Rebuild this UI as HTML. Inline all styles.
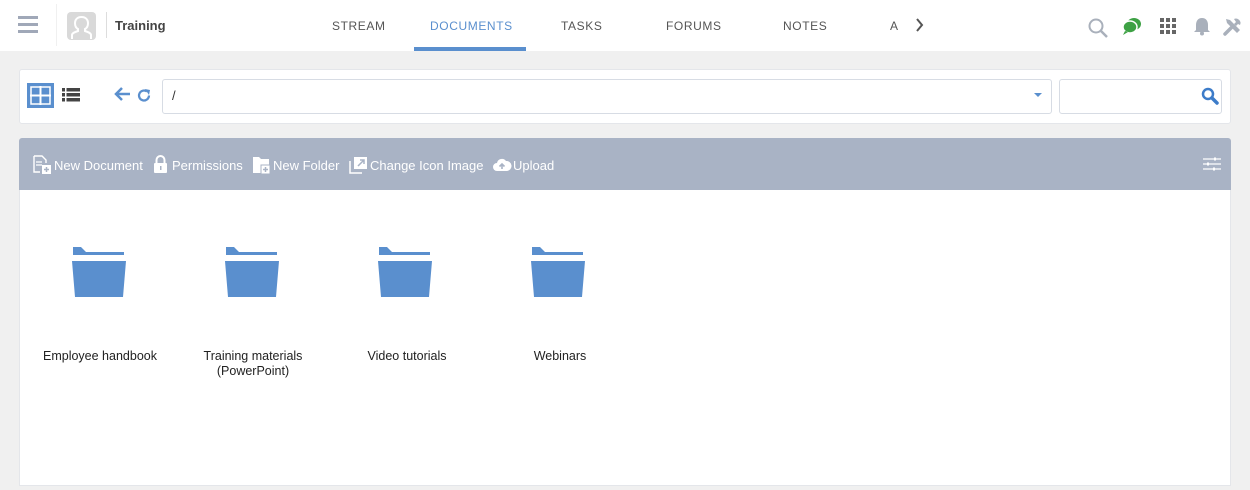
<!DOCTYPE html>
<html><head><meta charset="utf-8"><style>
*{box-sizing:border-box;margin:0;padding:0}
body{width:1250px;height:490px;background:#f0f0f0;font-family:"Liberation Sans",Arial,sans-serif;position:relative;overflow:hidden}
.hdr{position:absolute;left:0;top:0;width:1250px;height:51px;background:#fff}
.abs{position:absolute}
.nav{position:absolute;top:19px;font-size:12px;letter-spacing:0.6px;color:#555}
.card{position:absolute;background:#fff;border:1px solid #e4e6ea;border-radius:3px}
.inp{position:absolute;border:1px solid #d7dce4;border-radius:3px;background:#fff}
.bar{position:absolute;left:19px;top:138px;width:1212px;height:52px;background:#a9b3c5;border-radius:3px 3px 0 0}
.bi{position:absolute;top:19px;color:#fff;font-size:13px}
.lbl{position:absolute;width:150px;text-align:center;font-size:12.5px;color:#222;line-height:15px}
</style></head><body>
<div class="hdr">
  <div class="abs" style="left:18px;top:16px;width:20px;height:3px;background:#a0a8b8;box-shadow:0 7px 0 #a0a8b8,0 14px 0 #a0a8b8"></div>
  <div class="abs" style="left:56px;top:4px;width:1px;height:42px;background:#f0f0f0"></div>
  <svg class="abs" style="left:67px;top:12px" width="29" height="28"><rect width="29" height="28" rx="4" fill="#d9d9d9"/><path d="M5 27v-4c0-2 3-3 6-4v-2c-2-1-3-3-3-6 0-3 2-6 6.5-6s6.5 3 6.5 6c0 3-1 5-3 6v2c3 1 6 2 6 4v4" fill="none" stroke="#fff" stroke-width="2"/></svg>
  <div class="abs" style="left:106px;top:12px;width:1px;height:26px;background:#ddd"></div>
  <div class="abs" style="left:115px;top:18px;font-size:13px;font-weight:bold;color:#444">Training</div>
  <div class="nav" style="left:332px">STREAM</div>
  <div class="nav" style="left:430px;color:#5a8fce">DOCUMENTS</div>
  <div class="abs" style="left:414px;top:47px;width:112px;height:4px;background:#5a8fce"></div>
  <div class="nav" style="left:561px">TASKS</div>
  <div class="nav" style="left:666px">FORUMS</div>
  <div class="nav" style="left:783px">NOTES</div>
  <div class="nav" style="left:890px">A</div>
  <svg class="abs" style="left:915px;top:18px" width="10" height="14"><path d="M2 1l5 6-5 6" fill="none" stroke="#555" stroke-width="2"/></svg>
  <svg class="abs" style="left:1087px;top:17px" width="22" height="22"><circle cx="9" cy="9" r="6.5" fill="none" stroke="#a9b0bb" stroke-width="2"/><path d="M14 14l6 6" stroke="#a9b0bb" stroke-width="2.5"/></svg>
  <svg class="abs" style="left:1121px;top:16px" width="22" height="20"><ellipse cx="13" cy="8" rx="7" ry="6" fill="#3da144"/><ellipse cx="9" cy="11" rx="7" ry="6" fill="#3da144" stroke="#fff" stroke-width="1.5"/><path d="M4 15l-2 4 5-3z" fill="#3da144"/></svg>
  <svg class="abs" style="left:1160px;top:18px" width="16" height="16" fill="#666"><rect x="0" y="0" width="4" height="4"/><rect x="6" y="0" width="4" height="4"/><rect x="12" y="0" width="4" height="4"/><rect x="0" y="6" width="4" height="4"/><rect x="6" y="6" width="4" height="4"/><rect x="12" y="6" width="4" height="4"/><rect x="0" y="12" width="4" height="4"/><rect x="6" y="12" width="4" height="4"/><rect x="12" y="12" width="4" height="4"/></svg>
  <svg class="abs" style="left:1193px;top:16px" width="18" height="20"><path d="M9 2c4 0 6 3 6 7v5l2 2H1l2-2V9c0-4 2-7 6-7z" fill="#a9b0bb"/><circle cx="9" cy="17.5" r="2" fill="#a9b0bb"/></svg>
  <svg class="abs" style="left:1223px;top:16px" width="20" height="20"><path d="M2 18l8-8" stroke="#a9b0bb" stroke-width="3.5" stroke-linecap="round"/><path d="M11 3a4.5 4.5 0 0 1 6 6l-2-1-2 2-2-2 2-2z" fill="#a9b0bb"/><path d="M3 3l4 1 10 10-3 3L4 7z" fill="#a9b0bb"/></svg>
</div>

<div class="card" style="left:19px;top:69px;width:1212px;height:55px"></div>
<div class="abs" style="left:27px;top:83px;width:27px;height:25px;background:#5a8fce"></div>
<svg class="abs" style="left:27px;top:83px" width="27" height="25"><path d="M13.5 3v19M3 12.5h21" stroke="#fff" stroke-width="2"/><rect x="4" y="4" width="19" height="17" fill="none" stroke="#fff" stroke-width="1.5"/></svg>
<svg class="abs" style="left:62px;top:88px" width="18" height="14" fill="#444"><rect x="0" y="0" width="3" height="3.5"/><rect x="4.5" y="0" width="13.5" height="3.5"/><rect x="0" y="5" width="3" height="3.5"/><rect x="4.5" y="5" width="13.5" height="3.5"/><rect x="0" y="10" width="3" height="3.5"/><rect x="4.5" y="10" width="13.5" height="3.5"/></svg>
<svg class="abs" style="left:113px;top:86px" width="18" height="16"><path d="M17 8H3M9 2L3 8l6 6" fill="none" stroke="#5a8fce" stroke-width="2.5"/></svg>
<svg class="abs" style="left:137px;top:88px" width="15" height="15"><path d="M12 7.5a5 5 0 1 1-2-4" fill="none" stroke="#5a8fce" stroke-width="2.2"/><path d="M8 1l5 1-1 5z" fill="#5a8fce"/></svg>
<div class="inp" style="left:162px;top:79px;width:890px;height:35px"></div>
<div class="abs" style="left:172px;top:88px;font-size:13px;color:#333">/</div>
<div class="abs" style="left:1034px;top:93px;width:0;height:0;border-left:4px solid transparent;border-right:4px solid transparent;border-top:4px solid #5a8fce"></div>
<div class="inp" style="left:1059px;top:79px;width:163px;height:35px"></div>
<svg class="abs" style="left:1201px;top:87px" width="18" height="18"><circle cx="7" cy="7" r="5" fill="none" stroke="#3d7cc9" stroke-width="2.5"/><path d="M11 11l5 5" stroke="#3d7cc9" stroke-width="3.5" stroke-linecap="round"/></svg>

<div class="bar"></div>
<div class="abs" style="left:19px;top:190px;width:1212px;height:296px;background:#fff;border:1px solid #e4e6ea;border-top:none"></div>
<svg class="abs" style="left:33px;top:155px" width="20" height="20"><path d="M1 1h8l4 4v3M1 1v16h6" fill="none" stroke="#fff" stroke-width="1.4"/><path d="M3 7h6M3 10h6" stroke="#fff" stroke-width="1.3"/><rect x="9" y="10" width="9" height="9" fill="#fff"/><path d="M13.5 12v5M11 14.5h5" stroke="#a9b3c5" stroke-width="1.5"/></svg>
<div class="bi" style="left:54px;top:158px">New Document</div>
<svg class="abs" style="left:153px;top:155px" width="15" height="19"><path d="M3.5 8V5a4 4 0 0 1 8 0v3" fill="none" stroke="#fff" stroke-width="2"/><rect x="1" y="8" width="13" height="10" rx="1" fill="#fff"/><rect x="7" y="11" width="1.5" height="4" fill="#a9b3c5"/></svg>
<div class="bi" style="left:172px;top:158px">Permissions</div>
<svg class="abs" style="left:252px;top:156px" width="20" height="18"><path d="M1 1h6l2 2h8v4H1z M1 5h16v12H1z" fill="#fff"/><rect x="9" y="9" width="9" height="9" fill="#fff" stroke="#a9b3c5"/><path d="M13.5 11v5M11 13.5h5" stroke="#a9b3c5" stroke-width="1.5"/></svg>
<div class="bi" style="left:273px;top:158px">New Folder</div>
<svg class="abs" style="left:349px;top:156px" width="19" height="18"><path d="M1 5v12h12" fill="none" stroke="#fff" stroke-width="1.5"/><rect x="5" y="1" width="13" height="12" fill="#fff"/><path d="M9 10l6-6M11 4h4v4" fill="none" stroke="#a9b3c5" stroke-width="1.5"/></svg>
<div class="bi" style="left:370px;top:158px">Change Icon Image</div>
<svg class="abs" style="left:492px;top:157px" width="20" height="15"><path d="M5 14a4 4 0 0 1 0-8 5 5 0 0 1 9-2 4 4 0 0 1 1 10z" fill="#fff"/><path d="M10 12V7M7.5 9.5L10 7l2.5 2.5" fill="none" stroke="#a9b3c5" stroke-width="1.6"/></svg>
<div class="bi" style="left:513px;top:158px">Upload</div>
<svg class="abs" style="left:1203px;top:157px" width="18" height="14"><path d="M0 2h18M0 7h18M0 12h18" stroke="#fff" stroke-width="1.3"/><rect x="11" y="0.5" width="2" height="3" fill="#fff"/><rect x="4" y="5.5" width="2" height="3" fill="#fff"/><rect x="10" y="10.5" width="2" height="3" fill="#fff"/></svg>

<svg class="abs" style="left:0;top:240px" width="640" height="62">
 <defs><g id="f"><path d="M0 7h8l5 5h38v3H0z" fill="#5a8fce"/><path d="M-1 21h54l-3 36H2z" fill="#5a8fce"/></g></defs>
 <use href="#f" x="73" y="0"/><use href="#f" x="226" y="0"/><use href="#f" x="379" y="0"/><use href="#f" x="532" y="0"/>
</svg>
<div class="lbl" style="left:25px;top:349px">Employee handbook</div>
<div class="lbl" style="left:178px;top:349px">Training materials<br>(PowerPoint)</div>
<div class="lbl" style="left:332px;top:349px">Video tutorials</div>
<div class="lbl" style="left:485px;top:349px">Webinars</div>
</body></html>
